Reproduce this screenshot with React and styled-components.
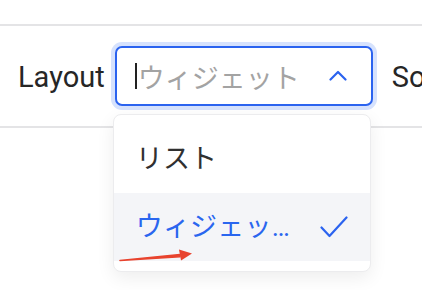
import React from "react";
import styled, { createGlobalStyle } from "styled-components";

const GlobalStyle = createGlobalStyle`
  html, body {
    margin: 0;
    padding: 0;
    background: #ffffff;
  }
  body {
    font-family: Roboto, "Noto Sans CJK JP", sans-serif;
    overflow: hidden;
  }
`;

const Page = styled.div`
  width: 422px;
  height: 290px;
  position: relative;
  overflow: hidden;
  padding-top: 24px;
  box-sizing: border-box;
`;

const Toolbar = styled.div`
  display: flex;
  align-items: center;
  height: 100px;
  border-top: 2px solid #e4e4e6;
  border-bottom: 2px solid #e4e4e6;
  padding-left: 18px;
  white-space: nowrap;
`;

const Label = styled.span`
  font-size: 29px;
  color: #262626;
  margin-right: 10px;
  flex-shrink: 0;
  padding-top: 2px;
`;

const SelectWrap = styled.div`
  position: relative;
  flex-shrink: 0;
  margin-right: 19px;
`;

const SelectBox = styled.div`
  width: 258px;
  height: 60px;
  box-sizing: border-box;
  border: 2px solid #2b63ef;
  border-radius: 7px;
  box-shadow: 0 0 0 4px #d6e2fd;
  display: flex;
  align-items: center;
  padding: 0 24px 0 18px;
  background: #fff;
`;

const Caret = styled.span`
  width: 2px;
  height: 26px;
  background: #222;
  margin-right: 1px;
`;

const Placeholder = styled.span`
  flex: 1;
  font-size: 27px;
  color: #a3a3a3;
`;

const Menu = styled.div`
  position: absolute;
  top: 68px;
  left: -2px;
  width: 258px;
  box-sizing: border-box;
  padding: 10px 0;
  background: #fff;
  border: 1px solid #ececee;
  border-radius: 8px;
  box-shadow: 0 6px 18px rgba(0, 0, 0, 0.07);
  z-index: 2;
`;

const Option = styled.div`
  height: 68px;
  box-sizing: border-box;
  display: flex;
  align-items: center;
  justify-content: space-between;
  padding: 0 22px 5px 22px;
  font-size: 27px;
  color: ${(p) => (p.selected ? "#2a66ef" : "#303030")};
  background: ${(p) => (p.selected ? "#f4f5f8" : "transparent")};
`;

const OptionText = styled.span`
  width: 158px;
  overflow: hidden;
  text-overflow: ellipsis;
  white-space: nowrap;
  letter-spacing: 0.2px;
`;

const Next = styled.span`
  font-size: 29px;
  color: #262626;
  padding-top: 2px;
`;

const Arrow = styled.svg`
  position: absolute;
  left: 118px;
  top: 246px;
  z-index: 3;
`;

const ChevronUp = () => (
  <svg width="18" height="12" viewBox="0 0 18 12" fill="none">
    <path d="M1.5 9.5 9 2l7.5 7.5" stroke="#2b63ef" strokeWidth="2.2" strokeLinecap="round" strokeLinejoin="round" />
  </svg>
);

const Check = () => (
  <svg width="28" height="22" viewBox="0 0 28 22" fill="none" style={{ marginTop: 5 }}>
    <path d="M1.5 11.5 9.5 20 26.5 1.5" stroke="#2b63ef" strokeWidth="2.2" strokeLinecap="round" strokeLinejoin="round" />
  </svg>
);

export default function App() {
  return (
    <>
      <GlobalStyle />
      <Page>
        <Toolbar>
          <Label>Layout</Label>
          <SelectWrap>
            <SelectBox>
              <Caret />
              <Placeholder>ウィジェット</Placeholder>
              <ChevronUp />
            </SelectBox>
            <Menu>
              <Option>
                <OptionText>リスト</OptionText>
              </Option>
              <Option selected>
                <OptionText>ウィジェット</OptionText>
                <Check />
              </Option>
            </Menu>
          </SelectWrap>
          <Next>Sort</Next>
        </Toolbar>
        <Arrow width="76" height="18" viewBox="0 0 76 18">
          <path d="M2 14.5 L62 8.6 L62 10.8 Z" fill="#e8432e" stroke="#e8432e" strokeWidth="1.6" strokeLinejoin="round" />
          <path d="M61 3.5 L74 7.5 L63 14.5 Z" fill="#e8432e" />
        </Arrow>
      </Page>
    </>
  );
}
